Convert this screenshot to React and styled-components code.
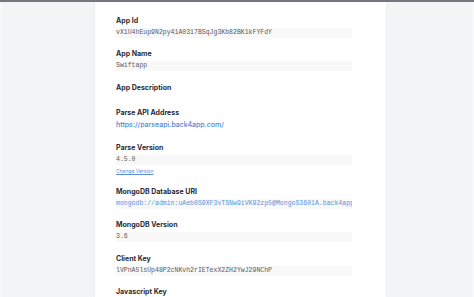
import styled, { createGlobalStyle } from "styled-components";

const GlobalStyle = createGlobalStyle`
  html, body {
    margin: 0;
    padding: 0;
    height: 100%;
    overflow: hidden;
    background: #f3f4f6;
  }
  #root {
    height: 100%;
  }
`

const Page = styled.div`
  height: 100%;
  display: flex;
  flex-direction: column;
  overflow: hidden;
  font-family: Inter, "Liberation Sans", Arial, sans-serif;
`

const TopBar = styled.div`
  height: 2px;
  background: #77767f;
  flex-shrink: 0;
`

const Content = styled.div`
  flex: 1;
  min-height: 0;
  display: flex;
  padding-left: 95px;
  box-shadow: inset 2px 0 0 #f8f8fa, inset -2px 0 0 #f8f8fa;
`

const Card = styled.div`
  width: 291px;
  background: #fff;
  box-shadow: 0 0 2px rgba(0, 0, 0, 0.08);
  padding: 13.5px 34px 0 21px;
  box-sizing: border-box;
  display: flex;
  flex-direction: column;
  gap: 11.5px;
  overflow: hidden;
`

const Field = styled.div`
  display: flex;
  flex-direction: column;
  flex-shrink: 0;
`

const Label = styled.div`
  font-size: 7px;
  line-height: 9px;
  font-weight: 700;
  color: #2b2b33;
`

const Value = styled.div`
  margin-top: 3px;
  height: 10px;
  line-height: 10px;
  background: #f8f8f8;
  font-family: "Liberation Mono", "DejaVu Sans Mono", monospace;
  font-size: 6.5px;
  color: ${(p) => (p.$link ? "#5796dc" : "#5a5a61")};
  white-space: nowrap;
  overflow: hidden;
`

const Empty = styled.div`
  height: 4.5px;
`

const Link = styled.a`
  margin-top: 3.5px;
  height: 11px;
  line-height: 10px;
  font-size: 7px;
  font-weight: 500;
  color: #4a88d9;
  text-decoration: none;
`

const SmallLink = styled.a`
  margin-top: 2.5px;
  font-size: 5px;
  line-height: 8px;
  color: #5a8fd6;
  text-decoration: underline;
`

const fields = [
  { label: "App Id", value: "vX1U4hEup9N2py41A0317BSqJg3Kb82BK1kFYFdY" },
  { label: "App Name", value: "Swiftapp" },
  { label: "App Description", empty: true },
  { label: "Parse API Address", link: "https://parseapi.back4app.com/" },
  { label: "Parse Version", value: "4.5.0", extra: "Change Version" },
  {
    label: "MongoDB Database URI",
    value: "mongodb://admin:uAeb0S9XF3vTSNw9iVK92zp5@MongoS3601A.back4app",
    blue: true,
  },
  { label: "MongoDB Version", value: "3.6" },
  { label: "Client Key", value: "lVPnA5lsUp48P2cNKvh2rIETexX2ZH2YwJ29NChP" },
  { label: "Javascript Key", value: "" },
]

function App() {
  return (
    <Page>
      <GlobalStyle />
      <TopBar />
      <Content>
        <Card>
          {fields.map((f) => (
            <Field key={f.label}>
              <Label>{f.label}</Label>
              {f.empty && <Empty />}
              {f.link && <Link href="#">{f.link}</Link>}
              {f.value !== undefined && (
                <Value $link={f.blue}>{f.value}</Value>
              )}
              {f.extra && <SmallLink href="#">{f.extra}</SmallLink>}
            </Field>
          ))}
        </Card>
      </Content>
    </Page>
  );
}

export default App;
